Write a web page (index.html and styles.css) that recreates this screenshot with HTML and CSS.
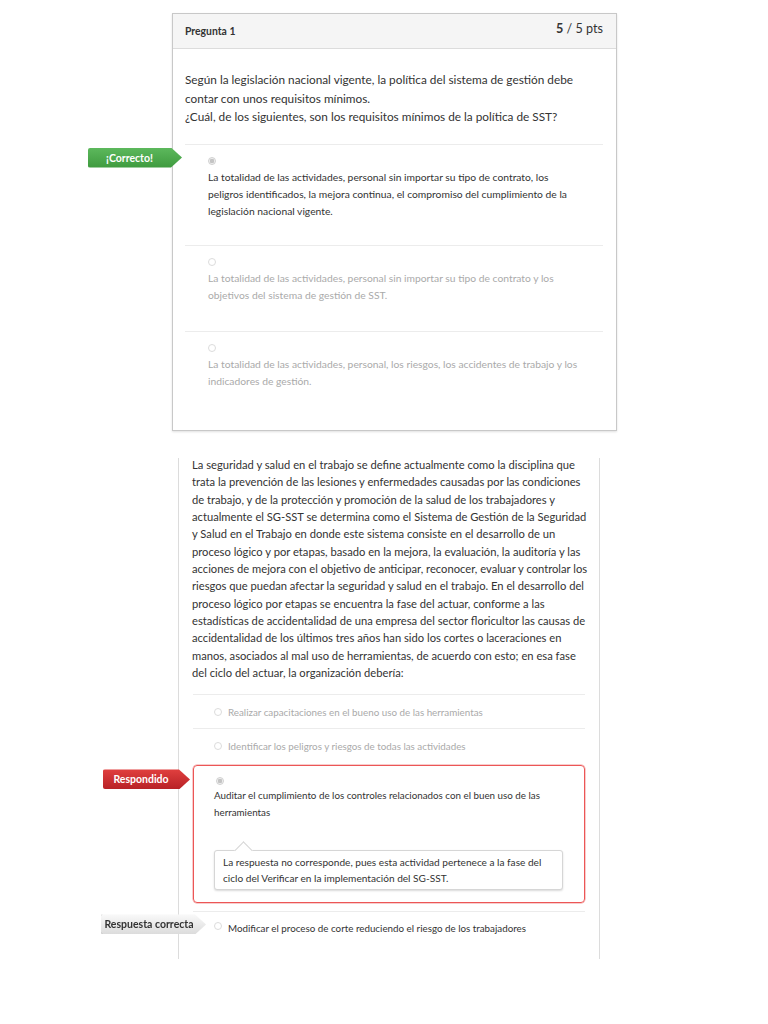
FILE: index.html
```html
<!DOCTYPE html>
<html lang="es">
<head>
<meta charset="utf-8">
<title>Pregunta</title>
<link rel="stylesheet" href="styles.css">
</head>
<body>
<div class="page">
  <section class="card">
    <header class="card-head">
      <span class="q-title">Pregunta 1</span>
      <span class="q-pts"><b>5</b> / 5 pts</span>
    </header>
    <div class="card-body">
      <p class="q-text">Según la legislación nacional vigente, la política del sistema de gestión debe contar con unos requisitos mínimos.<br>¿Cuál, de los siguientes, son los requisitos mínimos de la política de SST?</p>
      <div class="answer selected">
        <span class="flag flag-ok">¡Correcto!</span>
        <span class="radio radio-on"></span>
        <p class="a-text">La totalidad de las actividades, personal sin importar su tipo de contrato, los peligros identificados, la mejora continua, el compromiso del cumplimiento de la legislación nacional vigente.</p>
      </div>
      <div class="answer mid">
        <span class="radio"></span>
        <p class="a-text">La totalidad de las actividades, personal sin importar su tipo de contrato y los objetivos del sistema de gestión de SST.</p>
      </div>
      <div class="answer last">
        <span class="radio"></span>
        <p class="a-text">La totalidad de las actividades, personal, los riesgos, los accidentes de trabajo y los indicadores de gestión.</p>
      </div>
    </div>
  </section>

  <section class="q2">
    <p class="q2-text">La seguridad y salud en el trabajo se define actualmente como la disciplina que trata la prevención de las lesiones y enfermedades causadas por las condiciones de trabajo, y de la protección y promoción de la salud de los trabajadores y actualmente el SG-SST se determina como el Sistema de Gestión de la Seguridad y Salud en el Trabajo en donde este sistema consiste en el desarrollo de un proceso lógico y por etapas, basado en la mejora, la evaluación, la auditoría y las acciones de mejora con el objetivo de anticipar, reconocer, evaluar y controlar los riesgos que puedan afectar la seguridad y salud en el trabajo. En el desarrollo del proceso lógico por etapas se encuentra la fase del actuar, conforme a las estadísticas de accidentalidad de una empresa del sector floricultor las causas de accidentalidad de los últimos tres años han sido los cortes o laceraciones en manos, asociados al mal uso de herramientas, de acuerdo con esto; en esa fase del ciclo del actuar, la organización debería:</p>
    <div class="opt">
      <span class="radio"></span>
      <span class="opt-text">Realizar capacitaciones en el bueno uso de las herramientas</span>
    </div>
    <div class="opt">
      <span class="radio"></span>
      <span class="opt-text">Identificar los peligros y riesgos de todas las actividades</span>
    </div>
    <div class="wrong">
      <span class="flag flag-bad">Respondido</span>
      <span class="radio radio-on"></span>
      <p class="wrong-text">Auditar el cumplimiento de los controles relacionados con el buen uso de las herramientas</p>
      <div class="tip">La respuesta no corresponde, pues esta actividad pertenece a la fase del ciclo del Verificar en la implementación del SG-SST.</div>
    </div>
    <div class="opt correct">
      <span class="flag flag-right">Respuesta correcta</span>
      <span class="radio"></span>
      <span class="opt-text dark">Modificar el proceso de corte reduciendo el riesgo de los trabajadores</span>
    </div>
  </section>
</div>
</body>
</html>
```

FILE: styles.css
```css
* { box-sizing: border-box; }
html, body { margin: 0; padding: 0; background: #fff; }
body {
  font-family: Lato, "Open Sans", "Liberation Sans", sans-serif;
  color: #333;
  width: 768px;
  height: 1024px;
  overflow: hidden;
}
.page {
  padding-top: 13px;
  display: flex;
  flex-direction: column;
}
p { margin: 0; }

/* card 1 */
.card {
  flex: none;
  margin-left: 172px;
  width: 445px;
  height: 418px;
  border: 1px solid #c8c8c8;
  box-shadow: 0 1px 2px rgba(0,0,0,0.12);
  background: #fff;
}
.card-head {
  height: 35px;
  background: #f5f5f5;
  border-bottom: 1px solid #dcdcdc;
  display: flex;
  justify-content: space-between;
  align-items: center;
  padding: 0 13px 0 12px;
}
.q-title { font-size: 10.4px; font-weight: 700; color: #333; margin-top: -1px; }
.q-pts { font-size: 12.6px; color: #333; margin-top: -5px; }
.q-pts b { font-weight: 700; }
.card-body { padding: 22px 13px 0 12px; }
.q-text {
  font-size: 11.8px;
  line-height: 18.5px;
  color: #333;
  margin-bottom: 17px;
}
.answer {
  position: relative;
  border-top: 1px solid #ececec;
  padding: 12px 22px 25px 23px;
}
.answer.mid { padding-bottom: 27px; }
.answer.last { padding-bottom: 0; }
.answer .radio { display: block; margin-bottom: 4px; }
.a-text {
  font-size: 10.3px;
  line-height: 17px;
  color: #aaa;
}
.answer.selected .a-text { color: #333; }

.radio {
  width: 8px;
  height: 8px;
  border-radius: 50%;
  border: 1px solid #dcdcdc;
  background: #fff;
  flex: none;
}
.radio-on {
  border-color: #d0d0d0;
  background: radial-gradient(circle, #c4c4c4 0 2px, #f0f0f0 2.5px);
}

/* flags */
.flag {
  position: absolute;
  height: 20px;
  line-height: 20px;
  font-size: 10.5px;
  font-weight: 700;
  text-align: center;
  white-space: nowrap;
  clip-path: polygon(0 0, calc(100% - 11px) 0, 100% 50%, calc(100% - 11px) 100%, 0 100%);
  border-radius: 2px 0 0 2px;
}
.flag-ok {
  left: -97px;
  top: 3px;
  width: 94px;
  padding-right: 11px;
  color: #fff;
  background: linear-gradient(#5cb85c, #3e9a3e);
}
.flag-bad {
  left: -91px;
  top: 3px;
  width: 87px;
  padding-right: 11px;
  color: #fff;
  background: linear-gradient(#e1403f, #b82226);
}
.flag-right {
  left: -92px;
  top: 2px;
  width: 105px;
  padding-right: 9px;
  color: #333;
  background: linear-gradient(#fafafa, #dcdcdc);
  filter: drop-shadow(0 0 0.7px #888);
}

/* question 2 */
.q2 {
  flex: none;
  margin-top: 27px;
  margin-left: 178px;
  width: 422px;
  height: 501px;
  border-left: 1px solid #dcdcdc;
  border-right: 1px solid #dcdcdc;
  padding: 0 14px 0 14px;
  display: flex;
  flex-direction: column;
}
.q2 > * { flex: none; }
.q2-text {
  font-size: 11.2px;
  line-height: 17.35px;
  color: #333;
  margin-bottom: 13px;
  margin-left: -1px;
  margin-right: -5px;
  margin-top: -2px;
}
.opt {
  position: relative;
  border-top: 1px solid #ececec;
  height: 34px;
  display: flex;
  align-items: center;
  padding-left: 21px;
  gap: 6px;
}
.opt-text { font-size: 9.8px; color: #aaa; }
.opt-text.dark { color: #333; }
.wrong {
  position: relative;
  border: 1px solid #ec5656;
  border-radius: 4px;
  margin-top: 3px;
  padding: 11px 20px 12px 20px;
  box-shadow: 0 0 0 0.5px #f29a9a;
}
.wrong .radio { display: block; margin-left: 2px; margin-bottom: 2px; }
.wrong-text {
  font-size: 9.8px;
  line-height: 17px;
  color: #333;
  margin-bottom: 29px;
}
.tip {
  position: relative;
  width: 349px;
  border: 1px solid #d6d6d6;
  border-radius: 3px;
  background: #fff;
  box-shadow: 0 1px 2px rgba(0,0,0,0.15);
  padding: 3px 8px 3px 8px;
  font-size: 10.1px;
  line-height: 16px;
  color: #333;
}
.tip::before {
  content: "";
  position: absolute;
  left: 22px;
  top: -7px;
  width: 12px;
  height: 12px;
  background: #fff;
  border-left: 1px solid #d6d6d6;
  border-top: 1px solid #d6d6d6;
  transform: rotate(45deg);
}
.opt.correct { margin-top: 8px; height: 30px; align-items: flex-start; padding-top: 10px; }
```
